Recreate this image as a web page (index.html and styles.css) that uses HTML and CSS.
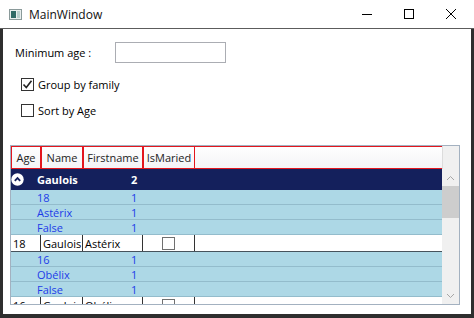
FILE: index.html
```html
<!DOCTYPE html>
<html lang="en">
<head>
    <meta charset="UTF-8">
    <meta name="viewport" content="width=device-width, initial-scale=1.0">
    <title>MainWindow</title>
    <link rel="stylesheet" href="styles.css">
</head>
<body>

    <div class="window">
        <div class="titlebar">
            <svg class="app-icon" width="13" height="11" viewBox="0 0 13 11">
                <rect x="0.5" y="0.5" width="12" height="10" fill="#e8eeee" stroke="#8a9a9a"/>
                <rect x="2" y="2" width="5" height="7" fill="#2f6a66"/>
                <rect x="8" y="2" width="3" height="7" fill="#b9cfcd"/>
            </svg>
            <span class="title">MainWindow</span>
            <div class="caption-buttons">
                <span class="cap-btn">
                    <svg width="10" height="10" viewBox="0 0 10 10"><path d="M0 5.5h10" stroke="#000" stroke-width="1"/></svg>
                </span>
                <span class="cap-btn">
                    <svg width="10" height="10" viewBox="0 0 10 10"><rect x="0.5" y="0.5" width="9" height="9" fill="none" stroke="#000"/></svg>
                </span>
                <span class="cap-btn">
                    <svg width="10" height="10" viewBox="0 0 10 10"><path d="M0 0L10 10M10 0L0 10" stroke="#000" stroke-width="1"/></svg>
                </span>
            </div>
        </div>

        <div class="client">
            <div class="field-row">
                <label class="field-label">Minimum age :</label>
                <div class="textbox"></div>
            </div>

            <div class="check-row first">
                <span class="check-box">
                    <svg width="11" height="11" viewBox="0 0 11 11"><path d="M1.5 5.5L4.3 8.5L9.5 1.8" fill="none" stroke="#222" stroke-width="1.6"/></svg>
                </span>
                <span>Group by family</span>
            </div>
            <div class="check-row">
                <span class="check-box"></span>
                <span>Sort by Age</span>
            </div>

            <div class="grid">
                <div class="grid-main">
                    <div class="grid-header">
                        <div class="hcell col-age">Age</div>
                        <div class="hcell col-name">Name</div>
                        <div class="hcell col-first">Firstname</div>
                        <div class="hcell col-married">IsMaried</div>
                        <div class="hfiller"></div>
                    </div>

                    <div class="group-row">
                        <span class="expander">
                            <svg width="13" height="13" viewBox="0 0 13 13">
                                <circle cx="6.5" cy="6.5" r="6.2" fill="#fff"/>
                                <path d="M3.8 7.8L6.5 5.1L9.2 7.8" fill="none" stroke="#14205c" stroke-width="1.8"/>
                            </svg>
                        </span>
                        <span class="group-name">Gaulois</span>
                        <span class="group-count">2</span>
                    </div>

                    <div class="sub-row"><span class="sub-name">18</span><span class="sub-count">1</span></div>
                    <div class="sub-row"><span class="sub-name">Astérix</span><span class="sub-count">1</span></div>
                    <div class="sub-row"><span class="sub-name">False</span><span class="sub-count">1</span></div>
                    <div class="data-row">
                        <div class="dcell col-age">18</div>
                        <div class="dcell col-name">Gaulois</div>
                        <div class="dcell col-first">Astérix</div>
                        <div class="dcell col-married"><span class="cell-check"></span></div>
                    </div>

                    <div class="sub-row"><span class="sub-name">16</span><span class="sub-count">1</span></div>
                    <div class="sub-row"><span class="sub-name">Obélix</span><span class="sub-count">1</span></div>
                    <div class="sub-row"><span class="sub-name">False</span><span class="sub-count">1</span></div>
                    <div class="data-row">
                        <div class="dcell col-age">16</div>
                        <div class="dcell col-name">Gaulois</div>
                        <div class="dcell col-first">Obélix</div>
                        <div class="dcell col-married"><span class="cell-check"></span></div>
                    </div>
                </div>

                <div class="vscroll">
                    <div class="scroll-corner"></div>
                    <div class="scroll-btn">
                        <svg width="9" height="6" viewBox="0 0 9 6"><path d="M1 5L4.5 1.5L8 5" fill="none" stroke="#a6a6a6" stroke-width="1"/></svg>
                    </div>
                    <div class="scroll-thumb"></div>
                    <div class="scroll-track"></div>
                    <div class="scroll-btn">
                        <svg width="9" height="6" viewBox="0 0 9 6"><path d="M1 1L4.5 4.5L8 1" fill="none" stroke="#a6a6a6" stroke-width="1"/></svg>
                    </div>
                </div>
            </div>
        </div>
    </div>

</body>
</html>
```

FILE: styles.css
```css
body {
    margin: 0;
    background-color: #fff;
    font-family: "Open Sans", "Noto Sans", sans-serif;
    font-size: 11px;
    color: #000;
}
.window {
    width: 474px;
    height: 318px;
    display: flex;
    flex-direction: column;
    overflow: hidden;
}
.titlebar {
    height: 28px;
    flex-shrink: 0;
    display: flex;
    align-items: center;
    border-bottom: 1px solid #5c5c5c;
}
.app-icon {
    margin-left: 9px;
    margin-top: 1px;
}
.title {
    margin-left: 7px;
    font-size: 12px;
    color: #111;
}
.caption-buttons {
    margin-left: auto;
    margin-right: 2px;
    display: flex;
}
.cap-btn {
    width: 42px;
    height: 28px;
    display: flex;
    align-items: center;
    justify-content: center;
}
.client {
    flex: 1;
    border-left: 3px solid #2e2e2e;
    border-right: 3px solid #2e2e2e;
    border-bottom: 4px solid #2e2e2e;
    display: flex;
    flex-direction: column;
}
.field-row {
    display: flex;
    align-items: center;
    margin-top: 13px;
    height: 21px;
}
.field-label {
    margin-left: 12px;
    width: 100px;
}
.textbox {
    width: 111px;
    height: 21px;
    box-sizing: border-box;
    border: 1px solid #abadb3;
}
.check-row {
    display: flex;
    align-items: center;
    height: 16px;
    margin-top: 10px;
    margin-left: 18px;
}
.check-row.first {
    margin-top: 13px;
}
.check-box {
    width: 13px;
    height: 13px;
    box-sizing: border-box;
    border: 1px solid #333;
    margin-right: 4px;
    display: flex;
    align-items: center;
    justify-content: center;
}
.grid {
    margin-top: 27px;
    margin-left: 7px;
    width: 450px;
    height: 160px;
    box-sizing: border-box;
    border: 1px solid #a3b1c0;
    display: flex;
    overflow: hidden;
}
.grid-main {
    flex: 1;
    overflow: hidden;
}
.grid-header {
    display: flex;
    height: 23px;
    background: linear-gradient(#fff, #f3f3f6);
}
.hcell {
    box-sizing: border-box;
    border: 1px solid #e3161e;
    display: flex;
    align-items: center;
    justify-content: center;
    color: #222;
}
.hfiller {
    flex: 1;
    border-top: 1px solid #e3161e;
    border-bottom: 1px solid #e3161e;
}
.col-age { width: 30px; }
.col-name { width: 42px; }
.col-first { width: 60px; }
.col-married { width: 52px; }
.group-row {
    height: 21px;
    background-color: #14205c;
    color: #fff;
    font-weight: bold;
    display: flex;
    align-items: center;
}
.expander {
    width: 13px;
    height: 13px;
    margin-left: 0;
    display: flex;
}
.group-name {
    margin-left: 13px;
    width: 94px;
}
.sub-row {
    height: 15px;
    box-sizing: border-box;
    border-bottom: 1px solid #93bccc;
    background-color: #add8e6;
    color: #1d3ce8;
    display: flex;
    align-items: center;
}
.sub-name {
    margin-left: 26px;
    width: 94px;
}
.data-row {
    height: 17px;
    box-sizing: border-box;
    border-bottom: 1px solid #46535c;
    display: flex;
}
.dcell {
    box-sizing: border-box;
    border-right: 1px solid #333;
    padding-left: 2px;
    display: flex;
    align-items: center;
}
.dcell.col-married {
    justify-content: center;
    padding-left: 0;
}
.cell-check {
    width: 13px;
    height: 13px;
    box-sizing: border-box;
    border: 1px solid #707070;
}
.vscroll {
    width: 17px;
    display: flex;
    flex-direction: column;
    background-color: #f0f0f0;
}
.scroll-corner {
    height: 23px;
    background-color: #f0f0f0;
    border-left: 1px solid #dcdcdc;
    box-sizing: border-box;
}
.scroll-btn {
    height: 17px;
    display: flex;
    align-items: center;
    justify-content: center;
}
.scroll-thumb {
    height: 32px;
    background-color: #cdcdcd;
}
.scroll-track {
    flex: 1;
}
```
